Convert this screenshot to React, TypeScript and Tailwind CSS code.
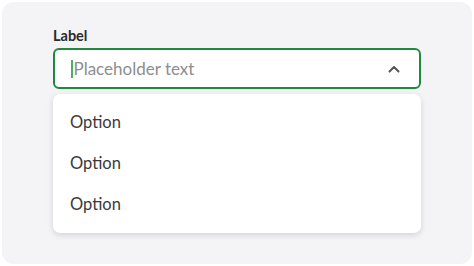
import React from "react";

export default function App() {
  return (
    <div className="w-[474px] h-[266px] bg-white p-[2px]" style={{ fontFamily: "Lato, 'Noto Sans', sans-serif" }}>
      <div className="w-full h-full rounded-[12px] bg-[#f4f4f6] pt-[25px] px-[51px]">
        <div className="text-[14.5px] font-bold text-[#2b2b2b] leading-[17px] mb-[4px]">Label</div>
        <div className="h-[41px] rounded-[6px] border-2 border-[#1f8a3c] bg-white flex items-center pl-[16px] pr-[16px]">
          <span className="w-[1.5px] h-[18px] bg-[#4caf67] mr-[1px]"></span>
          <span className="text-[17px] text-[#8e8e8e] flex-1">Placeholder text</span>
          <svg width="14" height="14" viewBox="0 0 14 14" fill="none" className="mr-[2px]">
            <path d="M2.5 9.5 L7 5 L11.5 9.5" stroke="#555" strokeWidth="2" strokeLinecap="round" strokeLinejoin="round" />
          </svg>
        </div>
        <div className="mt-[5px] rounded-[7px] bg-white shadow-[0_2px_6px_rgba(0,0,0,0.14)] pt-[8px] pb-[8px]">
          {["Option", "Option", "Option"].map((o, i) => (
            <div key={i} className="h-[41px] flex items-center pl-[17px] text-[16.5px] text-[#3a3a3a]">
              {o}
            </div>
          ))}
        </div>
      </div>
    </div>
  );
}
